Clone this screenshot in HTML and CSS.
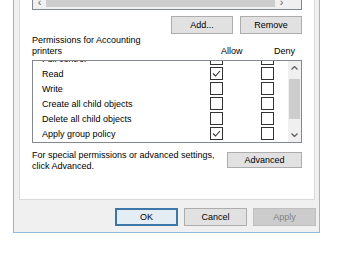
FILE: index.html
```html
<!DOCTYPE html>
<html lang="en">
<head>
    <meta charset="UTF-8">
    <meta name="viewport" content="width=device-width, initial-scale=1.0">
    <title>Printer Security</title>
    <link rel="stylesheet" href="styles.css">
</head>
<body>
    <div class="window">
        <div class="page">
            <div class="names">
                <div class="hscroll">
                    <span class="harrow">&#8249;</span>
                    <div class="hthumb"></div>
                    <span class="harrow">&#8250;</span>
                    <div class="corner"></div>
                </div>
            </div>

            <div class="name-buttons">
                <button type="button" class="btn">Add...</button>
                <button type="button" class="btn">Remove</button>
            </div>

            <div class="perm-head">
                <div class="perm-title">Permissions for Accounting<br>printers</div>
                <div class="col-head allow">Allow</div>
                <div class="col-head">Deny</div>
            </div>

            <div class="perm-list">
                <div class="rows">
                    <div class="row">
                        <span>Full control</span>
                        <span class="check"></span>
                        <span class="check"></span>
                    </div>
                    <div class="row">
                        <span>Read</span>
                        <span class="check"><svg viewBox="0 0 11 11"><polyline points="2,5.5 4.5,8 9,3"/></svg></span>
                        <span class="check"></span>
                    </div>
                    <div class="row">
                        <span>Write</span>
                        <span class="check"></span>
                        <span class="check"></span>
                    </div>
                    <div class="row">
                        <span>Create all child objects</span>
                        <span class="check"></span>
                        <span class="check"></span>
                    </div>
                    <div class="row">
                        <span>Delete all child objects</span>
                        <span class="check"></span>
                        <span class="check"></span>
                    </div>
                    <div class="row">
                        <span>Apply group policy</span>
                        <span class="check"><svg viewBox="0 0 11 11"><polyline points="2,5.5 4.5,8 9,3"/></svg></span>
                        <span class="check"></span>
                    </div>
                </div>
                <div class="vscroll">
                    <svg class="varrow" viewBox="0 0 7 4"><polyline points="0.5,3.5 3.5,0.5 6.5,3.5"/></svg>
                    <div class="vthumb"></div>
                    <svg class="varrow" viewBox="0 0 7 4"><polyline points="0.5,0.5 3.5,3.5 6.5,0.5"/></svg>
                </div>
            </div>

            <div class="advanced-row">
                <p>For special permissions or advanced settings,<br>click Advanced.</p>
                <button type="button" class="btn btn-advanced">Advanced</button>
            </div>
        </div>

        <div class="footer">
            <button type="button" class="btn btn-default">OK</button>
            <button type="button" class="btn">Cancel</button>
            <button type="button" class="btn" disabled>Apply</button>
        </div>
    </div>
</body>
</html>
```

FILE: styles.css
```css
body {
    margin: 0;
    background: #fff;
    font-family: "Liberation Sans", Arial, sans-serif;
    font-size: 9px;
    color: #000;
}
.window {
    width: 305px;
    margin: -64px 0 0 13px;
    border: 1px solid #8cbcd8;
    background: #f0f0f0;
}
.page {
    width: 270px;
    margin: 6px 0 0 5px;
    padding: 12px 12px 27px;
    background: #fff;
    border: 1px solid #d9d9d9;
}
.names {
    height: 54px;
    box-sizing: border-box;
    border: 1px solid #828790;
    display: flex;
    flex-direction: column;
    justify-content: flex-end;
}
.hscroll {
    height: 13px;
    background: #f0f0f0;
    display: flex;
    align-items: center;
}
.harrow {
    width: 13px;
    text-align: center;
    font-size: 11px;
    line-height: 11px;
    color: #606060;
}
.hthumb {
    flex: 1;
    height: 9px;
    background: #cdcdcd;
}
.corner {
    width: 13px;
    height: 13px;
    background: #f0f0f0;
}
.name-buttons {
    display: flex;
    justify-content: flex-end;
    gap: 7px;
    margin-top: 6px;
}
.btn {
    width: 62px;
    height: 18px;
    padding: 0;
    font-family: inherit;
    font-size: 9px;
    color: #000;
    background: #e1e1e1;
    border: 1px solid #adadad;
}
.btn:disabled {
    color: #838383;
    background: #cccccc;
    border-color: #bfbfbf;
}
.btn-default {
    border: 2px solid #3d76a8;
    background: #e5edf4;
}
.perm-head {
    display: grid;
    grid-template-columns: 1fr 13px 13px;
    column-gap: 38px;
    padding: 0 15px 0 0;
    margin-top: 1px;
    line-height: 11px;
    align-items: end;
}
.perm-title {
    white-space: nowrap;
}
.col-head {
    white-space: nowrap;
}
.col-head.allow {
    margin-left: -2px;
}
.perm-list {
    display: flex;
    height: 83px;
    box-sizing: border-box;
    margin-top: 3px;
    border: 1px solid #828790;
    overflow: hidden;
}
.rows {
    flex: 1;
    margin-top: -10px;
}
.row {
    display: grid;
    grid-template-columns: 1fr 13px 13px;
    column-gap: 38px;
    align-items: center;
    height: 15px;
    padding: 0 14px 0 9px;
}
.check {
    width: 13px;
    height: 13px;
    box-sizing: border-box;
    border: 1px solid #333;
    background: #fff;
}
.check svg {
    display: block;
    width: 11px;
    height: 11px;
    fill: none;
    stroke: #333;
    stroke-width: 1.1;
}
.vscroll {
    width: 13px;
    background: #f0f0f0;
    display: flex;
    flex-direction: column;
    align-items: center;
}
.varrow {
    width: 7px;
    height: 4px;
    margin: 5px 0;
    fill: none;
    stroke: #606060;
    stroke-width: 1.3;
}
.vthumb {
    width: 11px;
    height: 40px;
    margin: 4px 0 auto;
    background: #cdcdcd;
}
.advanced-row {
    display: flex;
    justify-content: space-between;
    margin-top: 7px;
}
.advanced-row p {
    margin: 0;
    line-height: 11px;
}
.btn-advanced {
    width: 75px;
    height: 16px;
    margin-top: 2px;
}
.footer {
    display: flex;
    justify-content: flex-end;
    gap: 6px;
    padding: 8px 3px 6px 0;
}
.footer .btn {
    width: 63px;
}
```
